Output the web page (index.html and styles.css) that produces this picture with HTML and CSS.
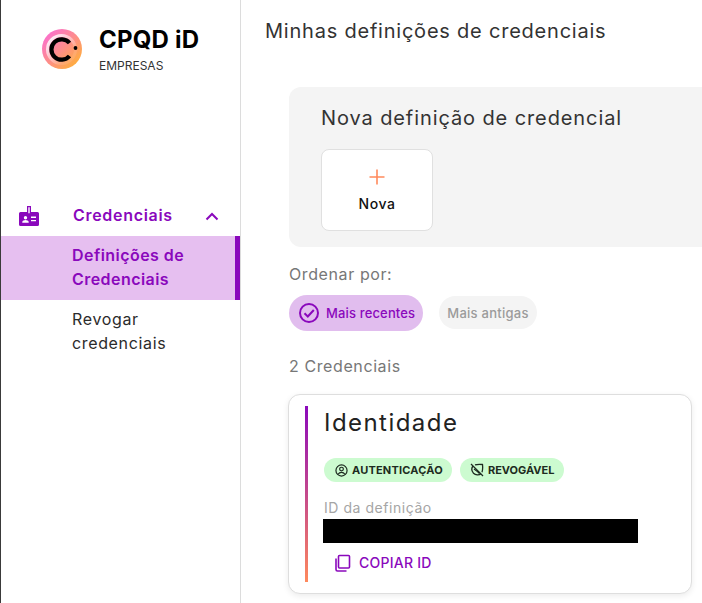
FILE: index.html
```html
<!DOCTYPE html>
<html lang="pt-BR">
<head>
<meta charset="utf-8">
<title>CPQD iD Empresas</title>
<link rel="stylesheet" href="styles.css">
</head>
<body>
<div class="app">
  <aside class="sidebar">
    <div class="brand">
      <svg class="logo" width="42" height="42" viewBox="0 0 42 42">
        <defs>
          <linearGradient id="lg" x1="0.1" y1="0.1" x2="0.85" y2="0.9">
            <stop offset="0" stop-color="#fb6fd0"/>
            <stop offset="0.5" stop-color="#fd8c8c"/>
            <stop offset="1" stop-color="#ffae3d"/>
          </linearGradient>
          <linearGradient id="lw" x1="0" y1="0" x2="1" y2="1">
            <stop offset="0" stop-color="#fff" stop-opacity="1"/>
            <stop offset="0.75" stop-color="#fff" stop-opacity="0.1"/>
          </linearGradient>
        </defs>
        <circle cx="21" cy="21" r="20" fill="url(#lg)"/>
        <circle cx="20.500" cy="21.500" r="14" fill="none" stroke="url(#lw)" stroke-width="3"/>
        <path d="M28.500 15A10.200 10.200 0 1 0 28.500 28" fill="none" stroke="#000" stroke-width="4.200"/>
        <circle cx="34.500" cy="20" r="1.900" fill="#000"/>
      </svg>
      <div class="brand-text">
        <div class="brand-name">CPQD iD</div>
        <div class="brand-sub">EMPRESAS</div>
      </div>
    </div>
    <nav class="nav">
      <div class="nav-head">
        <svg class="nav-icon" width="22" height="22" viewBox="0 0 22 22">
          <path fill="#8a08bc" fill-rule="evenodd" d="M9 1h4v6h6.500a1.500 1.500 0 0 1 1.500 1.500V19.500a1.500 1.500 0 0 1-1.500 1.500h-17A1.500 1.500 0 0 1 1 19.500V8.500A1.500 1.500 0 0 1 2.500 7H9V1Zm1.300 1.300v6h1.400v-6h-1.400ZM7.500 11a1.700 1.700 0 1 0 0 3.400 1.700 1.700 0 0 0 0-3.400ZM4.300 17.800h6.400v-.8c0-1.200-2-1.900-3.200-1.900s-3.200.7-3.200 1.900v.8Zm8.700-6.300v1.400h5v-1.400h-5Zm0 3.400v1.400h5v-1.400h-5Z"/>
        </svg>
        <span class="nav-label">Credenciais</span>
        <svg class="chev" width="14" height="9" viewBox="0 0 14 9"><path d="M1.500 7.500 7 2l5.500 5.500" fill="none" stroke="#8a08bc" stroke-width="2"/></svg>
      </div>
      <a class="nav-item active">Definições de Credenciais</a>
      <a class="nav-item">Revogar credenciais</a>
    </nav>
  </aside>
  <main class="main">
    <h1 class="page-title">Minhas definições de credenciais</h1>
    <div class="content">
      <section class="panel">
        <h2 class="panel-title">Nova definição de credencial</h2>
        <button class="new-btn">
          <svg width="16" height="16" viewBox="0 0 16 16"><path d="M8 .5v15M.5 8h15" stroke="#ff8a5c" stroke-width="1.600" fill="none"/></svg>
          <span>Nova</span>
        </button>
      </section>
      <div class="label sort-label">Ordenar por:</div>
      <div class="chips">
        <span class="chip on">
          <svg width="22" height="22" viewBox="0 0 22 22"><circle cx="11" cy="11" r="9" fill="none" stroke="#8a08bc" stroke-width="2"/><path d="M6.500 11.300 9.800 14.500 15.800 8" fill="none" stroke="#8a08bc" stroke-width="2"/></svg>
          Mais recentes
        </span>
        <span class="chip off">Mais antigas</span>
      </div>
      <div class="label count">2 Credenciais</div>
      <article class="card">
        <div class="card-body">
          <h3 class="card-title">Identidade</h3>
          <div class="badges">
            <span class="badge">
              <svg width="13" height="13" viewBox="0 0 14 14"><circle cx="7" cy="7" r="6" fill="none" stroke="#1d2b20" stroke-width="1.300"/><circle cx="7" cy="5.500" r="2" fill="none" stroke="#1d2b20" stroke-width="1.300"/><path d="M3.300 11c1-1.500 2.300-2 3.700-2s2.700.5 3.700 2" fill="none" stroke="#1d2b20" stroke-width="1.300"/></svg>
              AUTENTICAÇÃO
            </span>
            <span class="badge alt">
              <svg width="14" height="14" viewBox="0 0 14 14"><path d="M3 3c-1.500 2-1.500 5 .5 7.200 2 2 5.500 2.200 7.500.5M5 1.900c2-.7 4.500-.6 7.500-.4.300 3 .3 5.600-.5 7.700M4 6c1.500 1 3.500 2.500 5.500 4.500" fill="none" stroke="#1d2b20" stroke-width="1.300"/><path d="M1 1l12 12" stroke="#1d2b20" stroke-width="1.300"/></svg>
              REVOGÁVEL
            </span>
          </div>
          <div class="id-label">ID da definição</div>
          <div class="id-value"></div>
          <a class="copy">
            <svg width="16" height="18" viewBox="0 0 16 18"><path d="M4.500 1.500h9a1 1 0 0 1 1 1v10.500a1 1 0 0 1-1 1h-9a1 1 0 0 1-1-1V2.500a1 1 0 0 1 1-1Z" fill="none" stroke="#8a08bc" stroke-width="1.600"/><path d="M1 4.500v11a1.500 1.500 0 0 0 1.500 1.500h9" fill="none" stroke="#8a08bc" stroke-width="1.600"/></svg>
            COPIAR ID
          </a>
        </div>
      </article>
    </div>
  </main>
</div>
</body>
</html>
```
FILE: styles.css
```css
* { box-sizing: border-box; }
html, body { margin: 0; padding: 0; height: 100%; overflow: hidden; background: #fff; }
body { font-family: Inter, "Open Sans", sans-serif; color: #2b2b2b; }
.app { display: flex; height: 603px; width: 702px; overflow: hidden; border-left: 1px solid #3a3a3a; }
.sidebar { width: 240px; flex: none; border-right: 1px solid #dcdcdc; }
.brand { display: flex; align-items: center; height: 100px; padding: 0 0 2px 40px; gap: 16px; }
.logo { flex: none; }
.brand-text { padding-top: 2px; }
.brand-name { font-size: 24px; font-weight: 700; line-height: 28px; color: #000; letter-spacing: 0.2px; }
.brand-sub { font-size: 12px; line-height: 16px; margin-top: 4px; color: #333; }
.nav { margin-top: 97px; }
.nav-head { display: flex; align-items: center; height: 39px; padding: 0 0 3px 17px; }
.nav-icon, .chev { margin-top: 2px; }
.nav-label { font-size: 16px; font-weight: 600; color: #8a08bc; margin-left: 33px; flex: 1; letter-spacing: 0.7px; }
.chev { margin-right: 21px; }
.nav-item { display: block; padding: 7px 40px 9px 71px; font-size: 16px; line-height: 24px; color: #2b2b2b; letter-spacing: 0.65px; }
.nav-item.active { background: #e6bff0; color: #8a08bc; font-weight: 600; border-right: 5px solid #8a08bc; padding-right: 30px; letter-spacing: 0.45px; }
.main { flex: 1; min-width: 0; overflow: hidden; }
.page-title { margin: 0; padding: 18px 0 0 24px; font-size: 20px; line-height: 26px; font-weight: 400; color: #333; letter-spacing: 0.78px; white-space: nowrap; }
.content { margin: 43px 0 0 48px; width: 420px; }
.panel { width: 600px; height: 160px; background: #f4f4f4; border-radius: 12px; padding: 18px 32px 16px; }
.panel-title { margin: 0; font-size: 20px; font-weight: 400; line-height: 26px; color: #333; letter-spacing: 0.9px; white-space: nowrap; }
.new-btn { display: flex; flex-direction: column; align-items: center; width: 112px; height: 82px; margin-top: 18px; padding: 19px 0 0; background: #fff; border: 1px solid #e0e0e0; border-radius: 8px; font: inherit; cursor: pointer; }
.new-btn span { margin-top: 9px; font-size: 14px; line-height: 20px; font-weight: 500; color: #111; letter-spacing: 0.6px; }
.label { font-size: 16px; line-height: 24px; color: #777; letter-spacing: 0.6px; }
.sort-label { margin-top: 15px; }
.chips { display: flex; align-items: flex-start; gap: 16px; margin-top: 9px; }
.chip { display: flex; align-items: center; border-radius: 18px; font-size: 13px; font-weight: 500; letter-spacing: 0.15px; white-space: nowrap; }
.chip.on { height: 36px; width: 134px; padding-left: 9px; gap: 6px; background: #e1bdee; color: #8a08bc; }
.chip.off { height: 33px; width: 98px; margin-top: 1px; justify-content: center; background: #f4f4f4; color: #9b9b9b; letter-spacing: 0.25px; }
.count { margin-top: 23px; }
.card { width: 404px; height: 200px; margin: 16px 0 0 -1px; background: #fff; border: 1px solid #dedede; border-radius: 12px; box-shadow: 0 2px 6px rgba(0,0,0,.08); padding: 11px 0 0 16px; }
.card-body { height: 176px; border-left: 3px solid; border-image: linear-gradient(#8a08bc, #ff8a5c) 1; padding-left: 16px; }
.card-title { margin: 0; font-size: 24px; font-weight: 400; line-height: 34px; color: #222; letter-spacing: 1.45px; }
.badges { display: flex; gap: 8px; margin-top: 18px; }
.badge { display: flex; align-items: center; gap: 4px; height: 24px; padding: 0 9px 0 11px; border-radius: 12px; background: #ccfbd0; font-size: 11px; font-weight: 700; color: #1d2b20; letter-spacing: 0.2px; white-space: nowrap; }
.badge.alt { padding: 0 10px; letter-spacing: 0; }
.id-label { margin-top: 16px; font-size: 14px; line-height: 20px; color: #a5a5a5; letter-spacing: 0.55px; }
.id-value { width: 315px; height: 24px; margin: 1px 0 0 -1px; background: #000; }
.copy { display: flex; align-items: center; gap: 8px; margin: 10px 0 0 11px; font-size: 14px; font-weight: 500; line-height: 20px; color: #8a08bc; letter-spacing: 0.25px; }
```
